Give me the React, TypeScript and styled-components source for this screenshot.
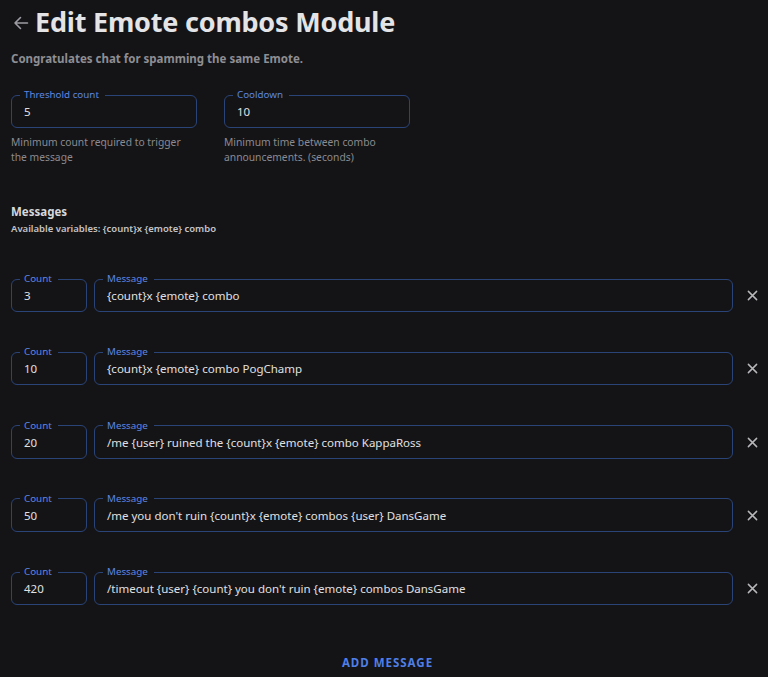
import styled, { createGlobalStyle } from "styled-components";

const messages = [
  { count: "3", text: "{count}x {emote} combo" },
  { count: "10", text: "{count}x {emote} combo PogChamp" },
  { count: "20", text: "/me {user} ruined the {count}x {emote} combo KappaRoss" },
  { count: "50", text: "/me you don't ruin {count}x {emote} combos {user} DansGame" },
  { count: "420", text: "/timeout {user} {count} you don't ruin {emote} combos DansGame" },
];

const GlobalStyle = createGlobalStyle`
  html, body {
    margin: 0;
    padding: 0;
    background: #141417;
    font-family: "Noto Sans", "Open Sans", sans-serif;
  }
`;

interface FieldProps {
  label: string;
  value: string;
}

const OutlinedField = ({ label, value }: FieldProps) => (
  <SField>
    <SFieldset>
      <SLegend>{label}</SLegend>
    </SFieldset>
    <SLabel>{label}</SLabel>
    <SValue>{value}</SValue>
  </SField>
);

const CloseIcon = () => (
  <svg width="11" height="11" viewBox="0 0 12 12" fill="none">
    <path d="M1.5 1.5l9 9M10.5 1.5l-9 9" stroke="#b8b8bc" strokeWidth="1.6" strokeLinecap="round" />
  </svg>
);

const BackIcon = () => (
  <svg width="16" height="16" viewBox="0 0 16 16" fill="none">
    <path d="M14.5 8H2M7.5 2.5L2 8l5.5 5.5" stroke="#9c9ca2" strokeWidth="1.6" strokeLinecap="round" strokeLinejoin="round" />
  </svg>
);

const App = () => {
  return (
    <SPage>
      <GlobalStyle />
      <SHeader>
        <SBack>
          <BackIcon />
        </SBack>
        <STitle>Edit Emote combos Module</STitle>
      </SHeader>
      <SSubtitle>Congratulates chat for spamming the same Emote.</SSubtitle>

      <SSettings>
        <SSetting>
          <OutlinedField label="Threshold count" value="5" />
          <SHelper>Minimum count required to trigger the message</SHelper>
        </SSetting>
        <SSetting>
          <OutlinedField label="Cooldown" value="10" />
          <SHelper>Minimum time between combo announcements. (seconds)</SHelper>
        </SSetting>
      </SSettings>

      <SSectionTitle>Messages</SSectionTitle>
      <SVariables>Available variables: {"{count}x {emote} combo"}</SVariables>

      <SMessageList>
        {messages.map((m, i) => (
          <SMessageRow key={i}>
            <SCountCell>
              <OutlinedField label="Count" value={m.count} />
            </SCountCell>
            <SMessageCell>
              <OutlinedField label="Message" value={m.text} />
            </SMessageCell>
            <SRemove>
              <CloseIcon />
            </SRemove>
          </SMessageRow>
        ))}
      </SMessageList>

      <SFooter>
        <SAddButton>Add message</SAddButton>
      </SFooter>
    </SPage>
  );
};

const SPage = styled.div`
  box-sizing: border-box;
  width: 768px;
  height: 677px;
  padding: 4px 4px 0 11px;
  background: #141417;
  color: #e2e2e4;
  overflow: hidden;
`;

const SHeader = styled.div`
  display: flex;
  align-items: center;
  gap: 6px;
  height: 34px;
`;

const SBack = styled.div`
  display: flex;
  align-items: center;
  padding-left: 2px;
  padding-top: 3px;
`;

const STitle = styled.h1`
  margin: 0;
  font-size: 27px;
  font-weight: 700;
  color: #e4e4e6;
  letter-spacing: -0.2px;
`;

const SSubtitle = styled.p`
  margin: 13px 0 0;
  font-size: 11.5px;
  font-weight: 700;
  color: #8e8e93;
`;

const SSettings = styled.div`
  display: flex;
  gap: 27px;
  margin-top: 29px;
`;

const SSetting = styled.div`
  display: flex;
  flex-direction: column;
  width: 186px;
`;

const SHelper = styled.div`
  max-width: 176px;
  margin-top: 7px;
  font-size: 10.3px;
  line-height: 15px;
  color: #8a8a90;
`;

const SSectionTitle = styled.div`
  margin-top: 39px;
  font-size: 11.5px;
  font-weight: 700;
  color: #d8d8da;
`;

const SVariables = styled.div`
  margin-top: 3px;
  font-size: 9.5px;
  font-weight: 600;
  color: #c4c4c8;
`;

const SMessageList = styled.div`
  display: flex;
  flex-direction: column;
  gap: 40.3px;
  margin-top: 44px;
`;

const SMessageRow = styled.div`
  display: flex;
  align-items: center;
  gap: 7px;
`;

const SCountCell = styled.div`
  width: 76px;
  flex-shrink: 0;
`;

const SMessageCell = styled.div`
  flex: 1;
`;

const SRemove = styled.button`
  display: flex;
  align-items: center;
  justify-content: center;
  width: 24px;
  height: 30px;
  padding: 0;
  border: none;
  background: transparent;
  cursor: pointer;
`;

const SField = styled.div`
  position: relative;
  box-sizing: border-box;
  height: 33px;
  display: flex;
  align-items: center;
  padding: 0 13px;
`;

const SFieldset = styled.fieldset`
  position: absolute;
  inset: -5px 0 0 0;
  margin: 0;
  padding: 0 8px;
  border: 1px solid #2a4478;
  border-radius: 6px;
  pointer-events: none;
`;

const SLegend = styled.legend`
  padding: 0 5px;
  font-size: 9.8px;
  line-height: 10px;
  visibility: hidden;
  white-space: nowrap;
`;

const SLabel = styled.span`
  position: absolute;
  top: -6px;
  left: 13px;
  font-size: 9.8px;
  line-height: 11px;
  color: #5c86e0;
  white-space: nowrap;
`;

const SValue = styled.span`
  font-size: 11.5px;
  color: #e0e0e2;
  white-space: nowrap;
`;

const SFooter = styled.div`
  display: flex;
  justify-content: center;
  margin-top: 46px;
`;

const SAddButton = styled.button`
  padding: 4px 8px;
  border: none;
  background: transparent;
  color: #4f7fe6;
  font-family: "Noto Sans", sans-serif;
  font-size: 11.5px;
  font-weight: 700;
  letter-spacing: 1px;
  text-transform: uppercase;
  cursor: pointer;
`;

export default App;
